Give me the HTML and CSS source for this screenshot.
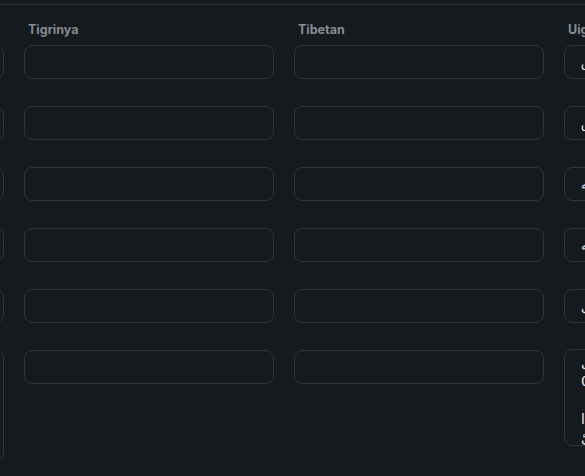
FILE: index.html
```html
<!DOCTYPE html>
<html lang="en">
<head>
<meta charset="utf-8">
<link rel="stylesheet" href="styles.css">
</head>
<body>
<div class="topbar"></div>
<div class="viewport">
  <div class="grid">
    <div class="col">
      <div class="label">Tigre</div>
      <input class="field" value="">
      <input class="field" value="">
      <input class="field" value="">
      <input class="field" value="">
      <input class="field" value="">
      <textarea class="field area tall"></textarea>
    </div>
    <div class="col">
      <div class="label">Tigrinya</div>
      <input class="field" value="">
      <input class="field" value="">
      <input class="field" value="">
      <input class="field" value="">
      <input class="field" value="">
      <input class="field" value="">
    </div>
    <div class="col">
      <div class="label">Tibetan</div>
      <input class="field" value="">
      <input class="field" value="">
      <input class="field" value="">
      <input class="field" value="">
      <input class="field" value="">
      <input class="field" value="">
    </div>
    <div class="col">
      <div class="label">Uighur</div>
      <input class="field ug" value="تېكىست سىناق">
      <input class="field ug" value="ئۇيغۇرچە سىناق">
      <input class="field ug" value="ئۇيغۇرچە">
      <input class="field ug" value="تىل ئۈلگىسە">
      <input class="field ug" value="ئاتالغۇ يېزىقى">
      <textarea class="field area ug mid">ئۇيغۇر تىلى ل
0 ئۇيغۇرچە

ئۇيغۇرچە تېكىست ا
ئۇيغۇر تىلى ئ</textarea>
    </div>
  </div>
</div>
</body>
</html>
```
FILE: styles.css
```css
* { box-sizing: border-box; }
html, body {
  margin: 0;
  padding: 0;
  background: #151a1e;
  width: 585px;
  height: 476px;
  overflow: hidden;
  font-family: Inter, "Noto Sans", sans-serif;
}
.topbar {
  height: 5px;
  border-bottom: 1px solid #2b3137;
}
.viewport {
  overflow: hidden;
  width: 585px;
}
.grid {
  display: flex;
  gap: 20px;
  margin-left: -246px;
  padding-top: 17px;
}
.col {
  width: 250px;
  flex: 0 0 250px;
  display: flex;
  flex-direction: column;
  gap: 27px;
}
.label {
  font-size: 12.5px;
  line-height: 16px;
  font-weight: 700;
  color: #858b93;
  padding-left: 4px;
  margin-bottom: -20px;
}
.field {
  display: block;
  width: 250px;
  height: 34px;
  margin: 0;
  background: #151a1e;
  border: 1px solid #2f353e;
  border-radius: 8px;
  padding: 0 12px;
  color: #e8eaed;
  font-family: "DejaVu Sans", sans-serif;
  font-size: 13px;
  outline: none;
}
.ug {
  text-align: left;
  padding-left: 16px;
}
.area {
  resize: none;
  padding: 3px 16px;
  line-height: 19px;
  font-size: 14px;
  overflow: hidden;
}
.tall { height: 112px; margin-top: -1px; }
.mid { height: 97px; margin-top: -1px; }
```
